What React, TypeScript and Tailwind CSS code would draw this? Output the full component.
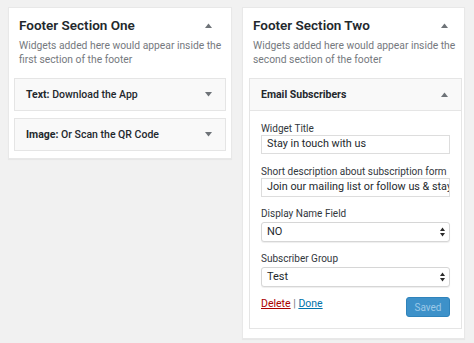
import React from 'react'

const font = { fontFamily: 'Roboto, "Liberation Sans", sans-serif' }

function Caret({ up }: { up?: boolean }) {
  return (
    <svg width="7" height="5" viewBox="0 0 7 5" className="text-[#6e7378]">
      {up ? <path d="M0 5 L3.5 0.5 L7 5 Z" fill="currentColor" /> : <path d="M0 0 L3.5 4.5 L7 0 Z" fill="currentColor" />}
    </svg>
  )
}

function SelectArrows() {
  return (
    <svg width="5" height="10" viewBox="0 0 5 10">
      <path d="M0 4 L2.5 0.5 L5 4 Z" fill="#2b2b2b" />
      <path d="M0 6 L2.5 9.5 L5 6 Z" fill="#2b2b2b" />
    </svg>
  )
}

function CollapsedWidget({ kind, title }: { kind: string; title: string }) {
  return (
    <div className="h-[33px] border border-[#e5e5e5] bg-[#f9f9f9] flex items-center justify-between pl-[11px] pr-[13px]">
      <p className="text-[10.5px] text-[#23282d] font-bold">
        {kind}: <span className="font-medium">{title}</span>
      </p>
      <Caret />
    </div>
  )
}

function SidebarHeader({ title, line2, pr }: { title: string; line2: string; pr: string }) {
  return (
    <div className="pl-[10px] pt-[7px]">
      <div className={`flex items-center justify-between h-[20px] ${pr}`}>
        <h2 className="text-[13.5px] font-semibold text-[#23282d]">{title}</h2>
        <Caret up />
      </div>
      <p className="mt-[4px] text-[10.3px] leading-[14px] text-[#75797e]">
        Widgets added here would appear inside the<br />
        {line2}
      </p>
    </div>
  )
}

function Label({ children }: { children: React.ReactNode }) {
  return <p className="text-[10px] leading-[13px] text-[#32373c]">{children}</p>
}

function TextBox({ value }: { value: string }) {
  return (
    <div className="h-[19px] border border-[#dddddd] bg-white flex items-center pl-[5px] overflow-hidden">
      <span className="text-[10.8px] text-[#23282d] whitespace-nowrap">{value}</span>
    </div>
  )
}

function SelectBox({ value }: { value: string }) {
  return (
    <div className="mt-[2px] h-[20px] rounded-[3px] border border-[#d6d6d6] bg-white shadow-[0_1px_1px_rgba(0,0,0,0.07)] flex items-center justify-between pl-[5px] pr-[4px]">
      <span className="text-[11px] text-[#23282d]">{value}</span>
      <SelectArrows />
    </div>
  )
}

export default function App() {
  return (
    <div style={font} className="w-[474px] h-[343px] bg-[#f1f1f1] flex items-start gap-[10px] pl-[8px] pt-[7px] overflow-hidden">
      <div className="w-[224px] bg-white border border-[#e8e8e8] shadow-[0_1px_1px_rgba(0,0,0,0.04)] pb-[7px]">
        <SidebarHeader title="Footer Section One" line2="first section of the footer" pr="pr-[19px]" />
        <div className="px-[5px] mt-[11px] flex flex-col gap-[7px]">
          <CollapsedWidget kind="Text" title="Download the App" />
          <CollapsedWidget kind="Image" title="Or Scan the QR Code" />
        </div>
      </div>

      <div className="w-[223px] bg-white border border-[#e8e8e8] shadow-[0_1px_1px_rgba(0,0,0,0.04)] pb-[9px]">
        <SidebarHeader title="Footer Section Two" line2="second section of the footer" pr="pr-[16px]" />
        <div className="pl-[6px] pr-[2px] mt-[11px]">
          <div className="border border-[#e5e5e5]">
            <div className="h-[32px] bg-[#f9f9f9] border-b border-[#e5e5e5] flex items-center justify-between pl-[11px] pr-[13px]">
              <p className="text-[10.5px] text-[#23282d] font-bold">Email Subscribers</p>
              <Caret up />
            </div>
            <div className="pl-[11px] pr-[11px] pt-[11px] pb-[11px]">
              <Label>Widget Title</Label>
              <TextBox value="Stay in touch with us" />
              <div className="mt-[11px]">
                <Label>Short description about subscription form</Label>
                <TextBox value="Join our mailing list or follow us & stay in touch" />
              </div>
              <div className="mt-[10px]">
                <Label>Display Name Field</Label>
                <SelectBox value="NO" />
              </div>
              <div className="mt-[10px]">
                <Label>Subscriber Group</Label>
                <SelectBox value="Test" />
              </div>
              <div className="mt-[10px] flex items-start justify-between">
                <p className="text-[10.5px] leading-[13px] text-[#72777c]">
                  <span className="text-[#a00] underline">Delete</span> | <span className="text-[#0073aa] underline">Done</span>
                </p>
                <div className="w-[44px] h-[20px] rounded-[3px] bg-[#3d91c9] border border-[#2f83bb] flex items-center justify-center">
                  <span className="text-[10px] text-[#9cc9e8]">Saved</span>
                </div>
              </div>
            </div>
          </div>
        </div>
      </div>
    </div>
  )
}
